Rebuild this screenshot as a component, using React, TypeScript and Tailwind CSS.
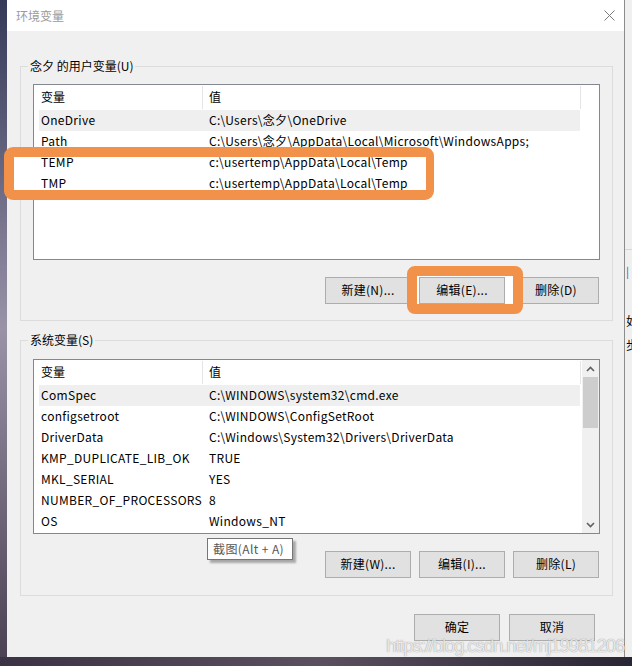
import clsx from "clsx";

type Item = { name: string; value: string; selected?: boolean };

const userVars: Item[] = [
  { name: "OneDrive", value: "C:\\Users\\念夕\\OneDrive", selected: true },
  { name: "Path", value: "C:\\Users\\念夕\\AppData\\Local\\Microsoft\\WindowsApps;" },
  { name: "TEMP", value: "c:\\usertemp\\AppData\\Local\\Temp" },
  { name: "TMP", value: "c:\\usertemp\\AppData\\Local\\Temp" },
];

const sysVars: Item[] = [
  { name: "ComSpec", value: "C:\\WINDOWS\\system32\\cmd.exe", selected: true },
  { name: "configsetroot", value: "C:\\WINDOWS\\ConfigSetRoot" },
  { name: "DriverData", value: "C:\\Windows\\System32\\Drivers\\DriverData" },
  { name: "KMP_DUPLICATE_LIB_OK", value: "TRUE" },
  { name: "MKL_SERIAL", value: "YES" },
  { name: "NUMBER_OF_PROCESSORS", value: "8" },
  { name: "OS", value: "Windows_NT" },
];

function Row({ item }: { item: Item }) {
  return (
    <div
      className={clsx(
        "ml-[5px] flex h-[21px] w-[541px] shrink-0 items-center whitespace-nowrap pb-[2px] tracking-[0.3px]",
        item.selected && "bg-[#efefef]"
      )}
    >
      <span className="relative z-20 w-[164px] pl-[2px]">{item.name}</span>
      <span className="relative z-20 pl-[6px]">{item.value}</span>
    </div>
  );
}

function Header() {
  return (
    <div className="flex h-[25px] shrink-0">
      <div className="my-[1px] flex w-[169px] items-center border-r border-[#e5e5e5] pb-[2px] pl-[7px]">变量</div>
      <div className="my-[1px] flex w-[378px] items-center border-r border-[#e5e5e5] pb-[2px] pl-[6px]">值</div>
    </div>
  );
}

function Chevron({ down }: { down?: boolean }) {
  return (
    <svg width="9" height="6" viewBox="0 0 9 6">
      <polyline
        points={down ? "1,1 4.5,4.5 8,1" : "1,5 4.5,1.5 8,5"}
        fill="none"
        stroke="#606060"
        strokeWidth="1.6"
      />
    </svg>
  );
}

function Btn({ label, lift }: { label: string; lift?: boolean }) {
  return (
    <div
      className={clsx(
        "flex h-[27px] w-[86px] items-center justify-center border border-[#adadad] bg-[#e1e1e1] pb-[2px] tracking-[0.3px]",
        lift && "relative z-20"
      )}
    >
      {label}
    </div>
  );
}

function Group({ label, children }: { label: string; children: React.ReactNode }) {
  return (
    <div className="relative ml-[13px] w-[593px] border border-[#dcdcdc]">
      <span className="absolute left-[7px] top-[-10px] bg-[#f0f0f0] px-[2px] leading-[18px]">{label}</span>
      {children}
    </div>
  );
}

export default function App() {
  return (
    <div className="relative flex h-[666px] w-[632px] flex-col overflow-hidden bg-[#2f2a3a] font-['Noto_Sans_CJK_SC','Microsoft_YaHei',sans-serif] text-[12px] text-black">
      <div className="flex h-[657px] shrink-0">
        {/* desktop strip on the left */}
        <div className="w-[7px] bg-gradient-to-b from-[#353a58] via-[#9a93a8] to-[#4c4254]" />

        {/* dialog */}
        <div className="flex w-[617px] flex-col bg-[#f0f0f0]">
          <div className="flex h-[31px] shrink-0 items-center justify-between bg-white pl-[9px] pr-[9px]">
            <span className="text-[#9a9a9a]">环境变量</span>
            <svg width="11" height="11" viewBox="0 0 11 11">
              <path d="M0.5 0.5 L10.5 10.5 M10.5 0.5 L0.5 10.5" stroke="#7a7a7a" strokeWidth="1" />
            </svg>
          </div>

          <div className="mt-[35px]">
            <Group label="念夕 的用户变量(U)">
              <div className="px-[12px] pb-[16px] pt-[17px]">
                <div className="flex h-[176px] flex-col border border-[#828790] bg-white">
                  <Header />
                  {userVars.map((v) => (
                    <Row key={v.name} item={v} />
                  ))}
                </div>
                <div className="mt-[17px] flex justify-end gap-[8px] pr-[1px]">
                  <Btn label="新建(N)..." />
                  <Btn label="编辑(E)..." lift />
                  <Btn label="删除(D)" />
                </div>
              </div>
            </Group>
          </div>

          <div className="mt-[19px]">
            <Group label="系统变量(S)">
              <div className="px-[12px] pb-[17px] pt-[18px]">
                <div className="flex h-[175px] border border-[#828790] bg-white">
                  <div className="flex flex-1 flex-col overflow-hidden">
                    <Header />
                    {sysVars.map((v) => (
                      <Row key={v.name} item={v} />
                    ))}
                  </div>
                  <div className="flex w-[17px] flex-col bg-[#f0f0f0]">
                    <div className="flex h-[17px] items-center justify-center">
                      <Chevron />
                    </div>
                    <div className="mx-[1px] h-[51px] bg-[#cdcdcd]" />
                    <div className="flex-1" />
                    <div className="flex h-[17px] items-center justify-center">
                      <Chevron down />
                    </div>
                  </div>
                </div>
                <div className="mt-[17px] flex justify-end gap-[8px] pr-[1px]">
                  <Btn label="新建(W)..." />
                  <Btn label="编辑(I)..." />
                  <Btn label="删除(L)" />
                </div>
              </div>
            </Group>
          </div>

          <div className="mt-[18px] flex justify-end gap-[9px] pr-[29px]">
            <Btn label="确定" />
            <Btn label="取消" />
          </div>
        </div>

        {/* other window behind, right edge */}
        <div className="w-px bg-[#8c8c8c]" />
        <div className="relative flex-1 overflow-hidden bg-[#f0f0f0]">
          <div className="mt-[249px] h-px bg-[#d6d6d6]" />
          <span className="absolute left-[1px] top-[263px] text-[11px] text-[#2b59c3]">|</span>
          <span className="absolute left-[1px] top-[312px]">如</span>
          <span className="absolute left-[1px] top-[336px]">步</span>
        </div>
      </div>
      <div className="h-[9px] bg-gradient-to-r from-[#3b3345] via-[#5a5060] to-[#2a2535]" />

      {/* white fill inside the annotation boxes, under the row text */}
      <div className="absolute left-[14px] top-[157px] z-10 h-[33px] w-[413px] bg-white" />
      <div className="absolute left-[417px] top-[276px] z-10 h-[28px] w-[96px] bg-white" />

      {/* orange annotation boxes */}
      <div className="absolute left-[4px] top-[147px] z-30 h-[53px] w-[430px] rounded-[9px] border-[10px] border-r-[8px] border-[#f2914a]" />
      <div className="absolute left-[407px] top-[266px] z-30 h-[48px] w-[116px] rounded-[8px] border-[10px] border-[#f2914a]" />

      {/* tooltip */}
      <div className="absolute left-[207px] top-[538px] z-30 flex h-[22px] w-[86px] items-center border border-[#767676] bg-white pb-[1px] pl-[5px] tracking-[0.4px] text-[#575757] shadow-[3px_3px_2px_rgba(0,0,0,0.3)]">
        截图(Alt + A)
      </div>

      {/* watermark */}
      <div className="absolute left-[386px] top-[632px] z-30 font-['Liberation_Sans',sans-serif] text-[19px] tracking-[-1.3px] text-white/80 [text-shadow:0_0_1px_rgba(0,0,0,0.5)]">
        https://blog.csdn.net/mj19981206
      </div>
    </div>
  );
}
